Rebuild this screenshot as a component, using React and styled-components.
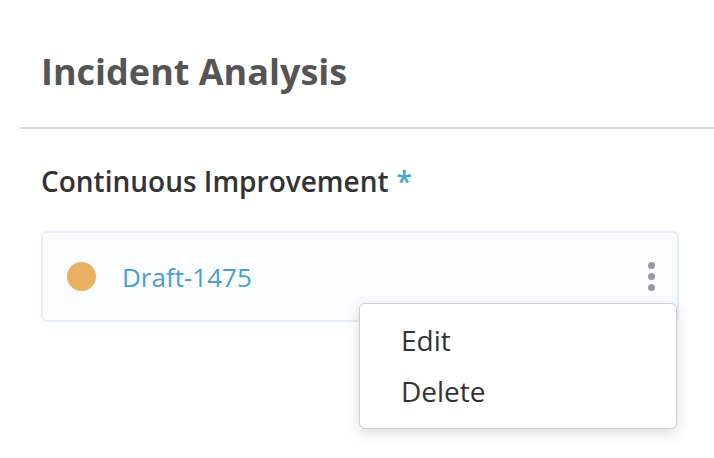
import React from 'react';
import styled, { createGlobalStyle } from 'styled-components';

const GlobalStyle = createGlobalStyle`
  html, body {
    margin: 0;
    padding: 0;
    background: #ffffff;
    font-family: "Open Sans", "Noto Sans", sans-serif;
  }
`;

const Page = styled.div`
  width: 714px;
  height: 458px;
  overflow: hidden;
  padding: 0 0 0 20px;
  box-sizing: border-box;
`;

const Header = styled.div`
  padding: 48px 0 31px 21px;
  border-bottom: 2px solid #dcdcdc;
`;

const Title = styled.h1`
  margin: 0;
  font-size: 36px;
  line-height: 48px;
  font-weight: 700;
  color: #555555;
`;

const Section = styled.div`
  padding: 33px 35px 0 21px;
`;

const Label = styled.div`
  font-size: 28px;
  line-height: 38px;
  font-weight: 600;
  color: #333333;
  margin-bottom: 31px;
`;

const Required = styled.span`
  color: #3ea6dc;
  margin-left: 8px;
`;

const Card = styled.div`
  position: relative;
  display: flex;
  align-items: center;
  height: 91px;
  box-sizing: border-box;
  padding: 0 22px 0 24px;
  border: 2px solid #e4eef8;
  border-radius: 6px;
  background: #fbfcfe;
`;

const StatusDot = styled.span`
  width: 29px;
  height: 29px;
  border-radius: 50%;
  background: ${({ color }) => color};
  flex-shrink: 0;
`;

const ItemLink = styled.a`
  margin-left: 26px;
  font-size: 26px;
  color: #4a9fd0;
  text-decoration: none;
  flex: 1;
`;

const Kebab = styled.button`
  display: flex;
  flex-direction: column;
  gap: 4px;
  padding: 0;
  border: none;
  background: none;
  span {
    width: 7px;
    height: 7px;
    border-radius: 50%;
    background: #999999;
  }
`;

const Menu = styled.div`
  position: absolute;
  top: 70px;
  right: 0;
  width: 318px;
  box-sizing: border-box;
  padding: 11px 0;
  background: #ffffff;
  border: 1px solid #cfcfcf;
  border-radius: 6px;
  box-shadow: 0 4px 14px rgba(0, 0, 0, 0.14);
  z-index: 2;
`;

const MenuItem = styled.div`
  padding: 0 41px;
  font-size: 28px;
  line-height: 51px;
  color: #333333;
`;

export default function App() {
  return (
    <>
      <GlobalStyle />
      <Page>
        <Header>
          <Title>Incident Analysis</Title>
        </Header>
        <Section>
          <Label>
            Continuous Improvement<Required>*</Required>
          </Label>
          <Card>
            <StatusDot color="#e8b060" />
            <ItemLink href="#">Draft-1475</ItemLink>
            <Kebab aria-label="More">
              <span />
              <span />
              <span />
            </Kebab>
            <Menu>
              <MenuItem>Edit</MenuItem>
              <MenuItem>Delete</MenuItem>
            </Menu>
          </Card>
        </Section>
      </Page>
    </>
  );
}
